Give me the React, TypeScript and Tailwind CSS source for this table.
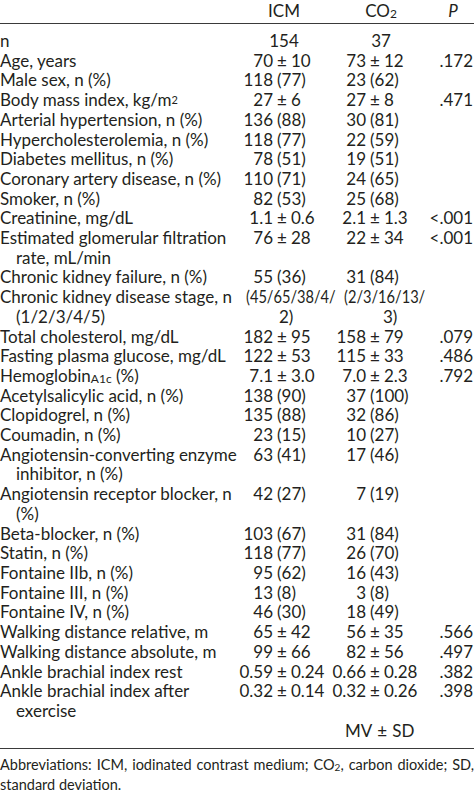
import React from "react";

type V = string | null;
type Row = { label: React.ReactNode[]; icm: V; co2: V; p?: string };

const rows: Row[] = [
  { label: ["Age, years"], icm: "70 ± 10", co2: "73 ± 12", p: ".172" },
  { label: ["Male sex, n (%)"], icm: "118 (77)", co2: "23 (62)" },
  {
    label: [
      <>
        Body mass index, kg/m<sup className="text-[11px] relative -top-[2px]">2</sup>
      </>,
    ],
    icm: "27 ± 6",
    co2: "27 ± 8",
    p: ".471",
  },
  { label: ["Arterial hypertension, n (%)"], icm: "136 (88)", co2: "30 (81)" },
  { label: ["Hypercholesterolemia, n (%)"], icm: "118 (77)", co2: "22 (59)" },
  { label: ["Diabetes mellitus, n (%)"], icm: "78 (51)", co2: "19 (51)" },
  { label: ["Coronary artery disease, n (%)"], icm: "110 (71)", co2: "24 (65)" },
  { label: ["Smoker, n (%)"], icm: "82 (53)", co2: "25 (68)" },
  { label: ["Creatinine, mg/dL"], icm: "1.1 ± 0.6", co2: "2.1 ± 1.3", p: "<.001" },
  {
    label: ["Estimated glomerular filtration", "rate, mL/min"],
    icm: "76 ± 28",
    co2: "22 ± 34",
    p: "<.001",
  },
  { label: ["Chronic kidney failure, n (%)"], icm: "55 (36)", co2: "31 (84)" },
];

const rows2: Row[] = [
  { label: ["Total cholesterol, mg/dL"], icm: "182 ± 95", co2: "158 ± 79", p: ".079" },
  { label: ["Fasting plasma glucose, mg/dL"], icm: "122 ± 53", co2: "115 ± 33", p: ".486" },
  {
    label: [
      <>
        Hemoglobin<sub className="text-[12px] relative top-[1px]">A1c</sub> (%)
      </>,
    ],
    icm: "7.1 ± 3.0",
    co2: "7.0 ± 2.3",
    p: ".792",
  },
  { label: ["Acetylsalicylic acid, n (%)"], icm: "138 (90)", co2: "37 (100)" },
  { label: ["Clopidogrel, n (%)"], icm: "135 (88)", co2: "32 (86)" },
  { label: ["Coumadin, n (%)"], icm: "23 (15)", co2: "10 (27)" },
  {
    label: ["Angiotensin-converting enzyme", "inhibitor, n (%)"],
    icm: "63 (41)",
    co2: "17 (46)",
  },
  {
    label: ["Angiotensin receptor blocker, n", "(%)"],
    icm: "42 (27)",
    co2: "7 (19)",
  },
  { label: ["Beta-blocker, n (%)"], icm: "103 (67)", co2: "31 (84)" },
  { label: ["Statin, n (%)"], icm: "118 (77)", co2: "26 (70)" },
  { label: ["Fontaine IIb, n (%)"], icm: "95 (62)", co2: "16 (43)" },
  { label: ["Fontaine III, n (%)"], icm: "13 (8)", co2: "3 (8)" },
  { label: ["Fontaine IV, n (%)"], icm: "46 (30)", co2: "18 (49)" },
  { label: ["Walking distance relative, m"], icm: "65 ± 42", co2: "56 ± 35", p: ".566" },
  { label: ["Walking distance absolute, m"], icm: "99 ± 66", co2: "82 ± 56", p: ".497" },
  { label: ["Ankle brachial index rest"], icm: "0.59 ± 0.24", co2: "0.66 ± 0.28", p: ".382" },
  {
    label: ["Ankle brachial index after", "exercise"],
    icm: "0.32 ± 0.14",
    co2: "0.32 ± 0.26",
    p: ".398",
  },
];

function Val({ v, leftW }: { v: V; leftW: string }) {
  if (!v) return null;
  let left = v;
  let mid: React.ReactNode = null;
  let right = "";
  if (v.includes(" ± ")) {
    const [a, b] = v.split(" ± ");
    left = a;
    right = b;
    mid = <span className="mx-[4px]">±</span>;
  } else {
    const i = v.indexOf(" ");
    left = v.slice(0, i);
    right = v.slice(i + 1);
    mid = <span className="w-[4px]" />;
  }
  return (
    <div className="flex whitespace-nowrap">
      <span className={`${leftW} flex justify-end shrink-0`}>{left}</span>
      {mid}
      <span>{right}</span>
    </div>
  );
}

function DataRow({ r }: { r: Row }) {
  return (
    <div className="flex">
      <div className="w-[240px] shrink-0 whitespace-nowrap">
        {r.label.map((l, i) => (
          <div key={i} className={i > 0 ? "pl-[16px]" : ""}>
            {l}
          </div>
        ))}
      </div>
      <div className="w-[95px] shrink-0">
        <Val v={r.icm} leftW="w-[33px]" />
      </div>
      <div className="w-[100px] shrink-0">
        <Val v={r.co2} leftW="w-[31px]" />
      </div>
      <div className="flex-1 min-w-0 flex justify-end pr-[1px] whitespace-nowrap">
        {r.p ? <span className="shrink-0">{r.p}</span> : null}
      </div>
    </div>
  );
}

export default function App() {
  return (
    <div className="w-[474px] h-[793px] bg-white overflow-hidden text-[#231f20] font-['Lato','Noto_Sans',sans-serif] text-[17px] leading-[19.7px]">
      <div className="flex h-[24px] pt-[2px] border-b border-[#3a3a3a] leading-[17px]">
        <div className="w-[240px] shrink-0" />
        <div className="w-[88px] shrink-0 text-center">ICM</div>
        <div className="w-[106px] shrink-0 text-center">
          CO<sub className="text-[12px] relative top-[1px]">2</sub>
        </div>
        <div className="flex-1 text-center italic pr-[2px]">P</div>
      </div>
      <div className="pt-[7px] pb-[8px] border-b border-[#3a3a3a]">
        <div className="flex">
          <div className="w-[240px] shrink-0">n</div>
          <div className="w-[88px] shrink-0 text-center">154</div>
          <div className="w-[106px] shrink-0 text-center">37</div>
        </div>
        {rows.map((r, i) => (
          <DataRow key={i} r={r} />
        ))}
        <div className="flex">
          <div className="w-[240px] shrink-0 whitespace-nowrap">
            <div>Chronic kidney disease stage, n</div>
            <div className="pl-[16px]">(1/2/3/4/5)</div>
          </div>
          <div className="w-[95px] shrink-0 whitespace-nowrap pl-[6px]">
            <div className="origin-left scale-x-[0.86]">(45/65/38/4/</div>
            <div className="pl-[33px]">2)</div>
          </div>
          <div className="w-[100px] shrink-0 whitespace-nowrap pl-[9px]">
            <div className="origin-left scale-x-[0.86]">(2/3/16/13/</div>
            <div className="pl-[39px]">3)</div>
          </div>
        </div>
        {rows2.map((r, i) => (
          <DataRow key={i} r={r} />
        ))}
        <div className="flex">
          <div className="w-[345px] shrink-0" />
          <div className="whitespace-nowrap">
            MV<span className="mx-[5px]">±</span>SD
          </div>
        </div>
      </div>
      <div className="pt-[6px] text-[14.5px] leading-[20px]">
        <div className="text-justify [text-align-last:justify]">
          Abbreviations: ICM, iodinated contrast medium; CO
          <sub className="text-[10px] relative top-[1px]">2</sub>, carbon dioxide; SD,
        </div>
        <div>standard deviation.</div>
      </div>
    </div>
  );
}
